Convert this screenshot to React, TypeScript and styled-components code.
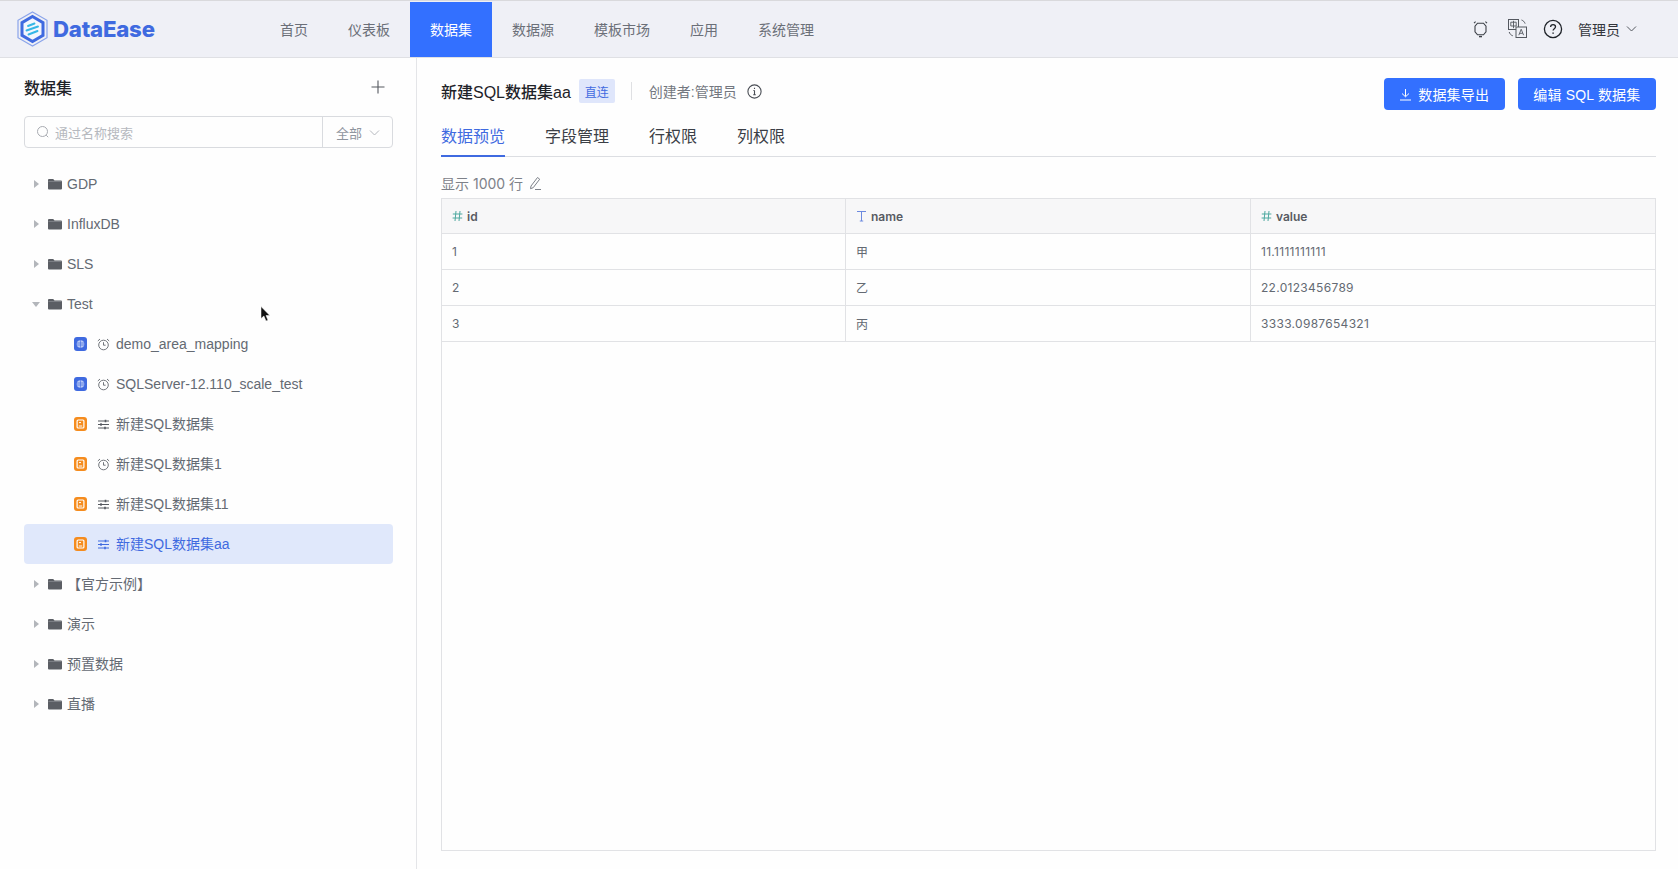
import React from "react";
import styled, { createGlobalStyle } from "styled-components";

const Global = createGlobalStyle`
  html, body { margin: 0; padding: 0; background: #fefefe; }
  * { box-sizing: border-box; }
  body { font-family: "Liberation Sans", "Noto Sans CJK SC", sans-serif; color: #1f2329; }
`;

const Page = styled.div`
  position: relative;
  width: 1678px;
  height: 869px;
  display: flex;
  flex-direction: column;
  overflow: hidden;
`;

const Header = styled.header`
  height: 58px;
  flex: none;
  display: flex;
  align-items: stretch;
  background: #eff0f6;
  border-top: 1px solid #d9d9dc;
  border-bottom: 1px solid #dfe0e4;
  padding: 1px 41px 0 17px;
`;

const Logo = styled.div`
  width: 243px;
  display: flex;
  align-items: center;
  gap: 5px;
  color: #3f6ae0;
  font: 800 22.2px/1 Inter, sans-serif;
  letter-spacing: -0.2px;
  padding-bottom: 1px;
  svg { flex: none; }
`;

const Nav = styled.nav`
  display: flex;
  flex: 1;
`;

const NavItem = styled.div<{ $active?: boolean }>`
  display: flex;
  align-items: center;
  padding: 0 20px 2px;
  font-size: 14px;
  color: ${(p) => (p.$active ? "#ffffff" : "#6b6f78")};
  background: ${(p) => (p.$active ? "#3370ff" : "transparent")};
`;

const HeaderRight = styled.div`
  display: flex;
  align-items: center;
  color: #3b3f46;
  padding-bottom: 2px;
`;

const IconSlot = styled.span<{ $w: number }>`
  display: flex;
  align-items: center;
  justify-content: center;
  width: ${(p) => p.$w}px;
`;

const UserName = styled.span`
  font-size: 14px;
  color: #33363c;
  margin-left: 12px;
  margin-right: 6px;
`;

const Body = styled.div`
  flex: 1;
  display: flex;
  min-height: 0;
`;

const Sidebar = styled.aside`
  width: 417px;
  flex: none;
  border-right: 1px solid #e4e5e8;
  padding: 0 23px 0 24px;
  display: flex;
  flex-direction: column;
`;

const SideTitleRow = styled.div`
  height: 58px;
  display: flex;
  align-items: center;
  justify-content: space-between;
  padding-right: 7px;
  font-size: 16px;
  font-weight: 500;
  color: #1f2329;
`;

const SearchBox = styled.div`
  height: 32px;
  display: flex;
  border: 1px solid #d9dbdf;
  border-radius: 4px;
  margin-bottom: 16px;
`;

const SearchField = styled.div`
  flex: 1;
  display: flex;
  align-items: center;
  gap: 5px;
  padding-left: 11px;
  font-size: 13px;
  color: #b6b9bf;
`;

const SearchScope = styled.div`
  width: 70px;
  border-left: 1px solid #d9dbdf;
  display: flex;
  align-items: center;
  gap: 7px;
  padding-left: 13px;
  font-size: 13px;
  color: #8f959e;
`;

const Tree = styled.div`
  display: flex;
  flex-direction: column;
`;

const Row = styled.div<{ $active?: boolean; $child?: boolean }>`
  height: 40px;
  display: flex;
  align-items: center;
  padding-left: ${(p) => (p.$child ? "50px" : "9px")};
  border-radius: 4px;
  font-size: 14px;
  line-height: 20px;
  color: ${(p) => (p.$active ? "#3f6ae0" : "#646a73")};
  background: ${(p) => (p.$active ? "#e0e8fb" : "transparent")};
`;

const Caret = styled.span<{ $open?: boolean }>`
  width: 0;
  height: 0;
  flex: none;
  ${(p) =>
    p.$open
      ? `border-left: 4.5px solid transparent; border-right: 4.5px solid transparent; border-top: 5px solid #b3b6bb; margin-left: -1px; margin-right: 8px;`
      : `border-top: 4.5px solid transparent; border-bottom: 4.5px solid transparent; border-left: 5px solid #b3b6bb; margin-left: 1px; margin-right: 9px;`}
`;

const Label = styled.span`
  margin-left: 5px;
`;

const ChildLabel = styled.span`
  margin-left: 6px;
`;

const SpacedIcon = styled.span`
  display: flex;
  margin-left: 10px;
`;

const Main = styled.main`
  flex: 1;
  min-width: 0;
  padding: 0 22px 18px 24px;
  display: flex;
  flex-direction: column;
`;

const TitleRow = styled.div`
  height: 53px;
  padding-top: 20px;
  display: flex;
  align-items: flex-start;
`;

const TitleGroup = styled.div`
  height: 26px;
  display: flex;
  align-items: center;
`;

const Title = styled.h1`
  margin: 0;
  font-size: 16px;
  font-weight: 500;
  color: #1f2329;
`;

const Badge = styled.span`
  margin-left: 8px;
  width: 36px;
  height: 24px;
  border-radius: 2px;
  background: #dfe6fb;
  color: #3f6ae0;
  font-size: 12px;
  display: flex;
  align-items: center;
  justify-content: center;
`;

const VLine = styled.span`
  width: 1px;
  height: 18px;
  background: #dfe0e3;
  margin: 0 17px 0 16px;
`;

const Creator = styled.span`
  font-size: 14px;
  color: #73777f;
`;

const InfoIcon = styled.span`
  display: flex;
  margin-left: 10px;
  color: #4a4e55;
`;

const Actions = styled.div`
  margin-left: auto;
  display: flex;
  gap: 13px;
`;

const Button = styled.button`
  height: 32px;
  padding: 0 15.5px;
  border: none;
  border-radius: 4px;
  background: #3370ff;
  color: #fff;
  font: 400 14px "Liberation Sans", "Noto Sans CJK SC", sans-serif;
  display: flex;
  align-items: center;
  gap: 6px;
  letter-spacing: 0.2px;
`;

const Tabs = styled.div`
  height: 46px;
  display: flex;
  gap: 40px;
  border-bottom: 1px solid #dcdee2;
`;

const Tab = styled.div<{ $active?: boolean }>`
  display: flex;
  align-items: center;
  height: 46px;
  padding-top: 4px;
  font-size: 16px;
  color: ${(p) => (p.$active ? "#3f6ae0" : "#3b3f46")};
  border-bottom: 2px solid ${(p) => (p.$active ? "#3f6ae0" : "transparent")};
`;

const RowCount = styled.div`
  height: 41px;
  padding-top: 11px;
  display: flex;
  align-items: center;
  gap: 5px;
  font: 400 14px Inter, "Noto Sans CJK SC", sans-serif;
  color: #7d8189;
`;

const Table = styled.div`
  flex: 1;
  border: 1px solid #e1e2e5;
  font-family: Inter, "Noto Sans CJK SC", sans-serif;
`;

const TRow = styled.div<{ $head?: boolean }>`
  display: grid;
  grid-template-columns: 404px 405px 1fr;
  height: ${(p) => (p.$head ? "35px" : "36px")};
  background: ${(p) => (p.$head ? "#f7f7f8" : "transparent")};
  border-bottom: 1px solid #e1e2e5;
`;

const HeadCell = styled.div`
  display: flex;
  align-items: center;
  gap: 4px;
  padding-left: 10px;
  border-right: 1px solid #e1e2e5;
  font-size: 12px;
  font-weight: 600;
  color: #575b62;
  &:last-child { border-right: none; }
`;

const Cell = styled.div`
  display: flex;
  align-items: center;
  padding-left: 10px;
  border-right: 1px solid #e1e2e5;
  font-size: 12px;
  letter-spacing: 0.3px;
  color: #646a73;
  &:last-child { border-right: none; }
`;

const Cursor = styled.svg`
  position: absolute;
  left: 260px;
  top: 306px;
`;

const Folder = () => (
  <svg width="14" height="12" viewBox="0 0 14 12">
    <path fill="#5b5e64" d="M1 1h4.2l1.3 1.5H13a1 1 0 0 1 1 1V10.5a1 1 0 0 1-1 1H1a1 1 0 0 1-1-1V2a1 1 0 0 1 1-1z" />
    <path fill="#8a8d92" d="M0.4 3.2h13.2v.7H.4z" />
  </svg>
);

const BlueDb = () => (
  <svg width="13" height="14" viewBox="0 0 13 14">
    <rect width="13" height="14" rx="3" fill="#3f6ae0" />
    <circle cx="6.5" cy="7" r="3.8" fill="#b9c9f5" />
    <path d="M2.8 6h7.4M2.8 8h7.4" stroke="#3f6ae0" strokeWidth=".7" />
    <path d="M6.5 3.2v7.6" stroke="#3f6ae0" strokeWidth=".6" />
  </svg>
);

const OrangeFile = () => (
  <svg width="13" height="14" viewBox="0 0 13 14">
    <rect width="13" height="14" rx="3" fill="#f58c1e" />
    <rect x="3.1" y="3" width="6.8" height="8" rx="1" fill="none" stroke="#fff" strokeWidth="1.2" />
    <path d="M4.8 9h3.4" stroke="#fff" strokeWidth="1" />
    <path d="M5 5.6h2" stroke="#fff" strokeWidth="1" />
  </svg>
);

const Clock = () => (
  <svg width="13" height="13" viewBox="0 0 13 13" fill="none" stroke="#62666d" strokeWidth=".9">
    <circle cx="6.5" cy="7" r="4.8" />
    <path d="M6.5 4.2V7.2H8.6M.8 3L3 1M12.2 3L10 1" />
  </svg>
);

const Sliders = ({ color = "#54585f" }: { color?: string }) => (
  <svg width="13" height="13" viewBox="0 0 13 13" fill="none" stroke={color} strokeWidth="1">
    <path d="M1 3h11M1 6.5h11M1 10h11" />
    <path d="M8.5 1.8v2.4M4 5.3v2.4M8 8.8v2.4" strokeWidth="1.6" />
  </svg>
);

const Hash = () => (
  <svg width="11" height="12" viewBox="0 0 11 12" fill="none" stroke="#4fa9a0" strokeWidth="1">
    <path d="M4 1L3 11M8 1L7 11M.8 4h9.6M.6 8h9.6" />
  </svg>
);

const TGlyph = () => (
  <svg width="11" height="12" viewBox="0 0 11 12" fill="none" stroke="#6d8adf" strokeWidth="1">
    <path d="M1 1.5h9M5.5 1.5V11M3.8 11h3.4" />
  </svg>
);

const folders1 = ["GDP", "InfluxDB", "SLS"];
const folders2 = ["【官方示例】", "演示", "预置数据", "直播"];
const children: { name: string; db: boolean; clock: boolean; active?: boolean }[] = [
  { name: "demo_area_mapping", db: true, clock: true },
  { name: "SQLServer-12.110_scale_test", db: true, clock: true },
  { name: "新建SQL数据集", db: false, clock: false },
  { name: "新建SQL数据集1", db: false, clock: true },
  { name: "新建SQL数据集11", db: false, clock: false },
  { name: "新建SQL数据集aa", db: false, clock: false, active: true },
];

const rows = [
  ["1", "甲", "11.1111111111"],
  ["2", "乙", "22.0123456789"],
  ["3", "丙", "3333.0987654321"],
];

const FolderRow = ({ name, open }: { name: string; open?: boolean }) => (
  <Row>
    <Caret $open={open} />
    <Folder />
    <Label>{name}</Label>
  </Row>
);

export default function App() {
  return (
    <Page>
      <Global />
      <Header>
        <Logo>
          <svg width="31" height="36" viewBox="0 0 31 36" fill="none">
            <path d="M15.5 1L30 9.3V26.7L15.5 35L1 26.7V9.3z" stroke="#8aa4ea" strokeWidth="1.2" />
            <path d="M15.5 5.5L26 11.6V24.4L15.5 30.5L5 24.4V11.6z" stroke="#3f6ae0" strokeWidth="3" fill="#f4f6fd" />
            <path d="M11 15L17.5 12.5M9.5 19.5L21 15.5M11.5 23.5L20.5 20" stroke="#35b6e6" strokeWidth="1.9" strokeLinecap="round" />
          </svg>
          DataEase
        </Logo>
        <Nav>
          <NavItem>首页</NavItem>
          <NavItem>仪表板</NavItem>
          <NavItem $active>数据集</NavItem>
          <NavItem>数据源</NavItem>
          <NavItem>模板市场</NavItem>
          <NavItem>应用</NavItem>
          <NavItem>系统管理</NavItem>
        </Nav>
        <HeaderRight>
          <IconSlot $w={32}>
            <svg width="15" height="18" viewBox="0 0 15 18" fill="none" stroke="#3b3f46" strokeWidth="1.1">
              <path d="M4.5 3.2h6L13 6.2v5.6l-2.5 3h-6L2 11.8V6.2z" />
              <path d="M6 16.6h3" strokeWidth="1.4" />
              <path d="M1 3.2L2.6 1.6M14 3.2L12.4 1.6" />
            </svg>
          </IconSlot>
          <IconSlot $w={43}>
            <svg width="19" height="19" viewBox="0 0 19 19" fill="none" stroke="#54585f" strokeWidth="1">
              <rect x=".5" y=".5" width="10" height="10" fill="#eff0f6" />
              <path d="M2.8 3.2h5.4v3.8H2.8zM5.5 1.8v7.4" strokeWidth=".9" />
              <rect x="8" y="8" width="10.5" height="10.5" fill="#eff0f6" />
              <path d="M10.8 16.2l2.4-6 2.4 6M11.7 14.3h3" strokeWidth=".9" />
              <path d="M13.5 1c1.6.5 3 1.8 3.6 3.6M1.2 13c.5 1.8 1.8 3.2 3.6 3.8" strokeWidth="1" />
            </svg>
          </IconSlot>
          <IconSlot $w={27}>
            <svg width="20" height="20" viewBox="0 0 20 20" fill="none" stroke="#1f2329" strokeWidth="1.3">
              <circle cx="10" cy="10" r="8.6" />
              <path d="M7.6 8c0-1.5 1-2.4 2.5-2.4s2.4.9 2.4 2.2c0 1.9-2.4 1.9-2.4 3.8" />
              <path d="M10.1 13.4v1.4" strokeWidth="1.5" />
            </svg>
          </IconSlot>
          <UserName>管理员</UserName>
          <svg width="11" height="11" viewBox="0 0 11 11" fill="none" stroke="#54585f" strokeWidth="1">
            <path d="M1 3.5L5.5 8L10 3.5" />
          </svg>
        </HeaderRight>
      </Header>
      <Body>
        <Sidebar>
          <SideTitleRow>
            数据集
            <svg width="16" height="16" viewBox="0 0 16 16" stroke="#54585f" strokeWidth="1.1">
              <path d="M8 1.5v13M1.5 8h13" />
            </svg>
          </SideTitleRow>
          <SearchBox>
            <SearchField>
              <svg width="14" height="14" viewBox="0 0 14 14" fill="none" stroke="#a8abb1" strokeWidth="1">
                <circle cx="6.5" cy="6.5" r="5" />
                <path d="M10.2 10.2l2 2" />
              </svg>
              通过名称搜索
            </SearchField>
            <SearchScope>
              全部
              <svg width="11" height="11" viewBox="0 0 11 11" fill="none" stroke="#b6b9bf" strokeWidth="1">
                <path d="M1 3.5L5.5 8L10 3.5" />
              </svg>
            </SearchScope>
          </SearchBox>
          <Tree>
            {folders1.map((f) => (
              <FolderRow key={f} name={f} />
            ))}
            <FolderRow name="Test" open />
            {children.map((c) => (
              <Row key={c.name} $child $active={c.active}>
                {c.db ? <BlueDb /> : <OrangeFile />}
                <SpacedIcon>
                  {c.clock ? <Clock /> : <Sliders color={c.active ? "#3f6ae0" : "#54585f"} />}
                </SpacedIcon>
                <ChildLabel>{c.name}</ChildLabel>
              </Row>
            ))}
            {folders2.map((f) => (
              <FolderRow key={f} name={f} />
            ))}
          </Tree>
        </Sidebar>
        <Main>
          <TitleRow>
            <TitleGroup>
              <Title>新建SQL数据集aa</Title>
              <Badge>直连</Badge>
              <VLine />
              <Creator>创建者:管理员</Creator>
              <InfoIcon>
                <svg width="15" height="15" viewBox="0 0 15 15" fill="none" stroke="currentColor" strokeWidth="1.1">
                  <circle cx="7.5" cy="7.5" r="6.6" />
                  <path d="M7.5 6.5v4.2M6.2 10.7h2.6M6.4 6.5h1.1M7.5 3.8v1.2" />
                </svg>
              </InfoIcon>
            </TitleGroup>
            <Actions>
              <Button>
                <svg width="13" height="13" viewBox="0 0 13 13" fill="none" stroke="#fff" strokeWidth="1">
                  <path d="M6.5 1v7.5M3 5.5l3.5 3.3L10 5.5M1 12h11" />
                </svg>
                数据集导出
              </Button>
              <Button>编辑 SQL 数据集</Button>
            </Actions>
          </TitleRow>
          <Tabs>
            <Tab $active>数据预览</Tab>
            <Tab>字段管理</Tab>
            <Tab>行权限</Tab>
            <Tab>列权限</Tab>
          </Tabs>
          <RowCount>
            显示 1000 行
            <svg width="14" height="15" viewBox="0 0 14 15" fill="none" stroke="#7d8189" strokeWidth="1">
              <path d="M3 10L9.5 1.5l2.2 1.7-6.5 8.5-2.7 1zM7 13.5h6" />
            </svg>
          </RowCount>
          <Table>
            <TRow $head>
              <HeadCell><Hash />id</HeadCell>
              <HeadCell><TGlyph />name</HeadCell>
              <HeadCell><Hash />value</HeadCell>
            </TRow>
            {rows.map((r) => (
              <TRow key={r[0]}>
                <Cell>{r[0]}</Cell>
                <Cell>{r[1]}</Cell>
                <Cell>{r[2]}</Cell>
              </TRow>
            ))}
          </Table>
        </Main>
      </Body>
      <Cursor width="11" height="16" viewBox="0 0 11 16">
        <path d="M1 0.5V12.5L3.9 10L6 15L8 14.2L6 9.5H9.8z" fill="#111" stroke="#fff" strokeWidth=".5" />
      </Cursor>
    </Page>
  );
}
